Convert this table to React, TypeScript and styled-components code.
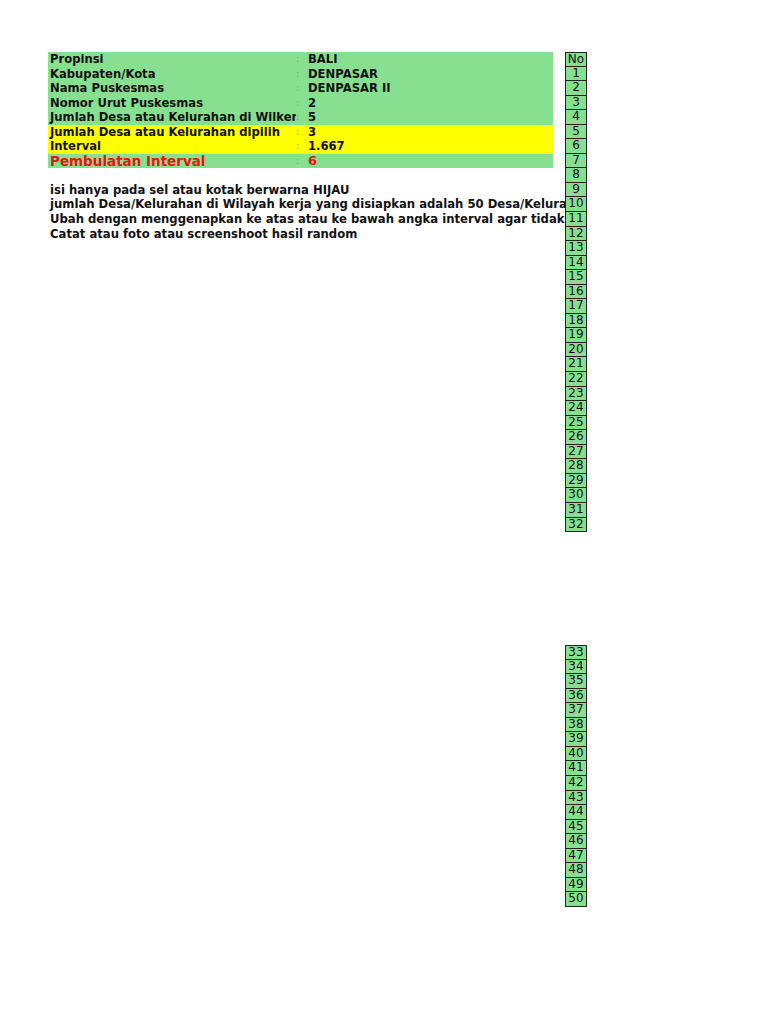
import React from "react";
import styled, { createGlobalStyle } from "styled-components";

const Global = createGlobalStyle`
  html, body { margin: 0; padding: 0; background: #fff; }
  body { font-family: "DejaVu Sans", sans-serif; }
`;

const ROW = 14.55;
const GREEN = "#87e08f";

const Page = styled.div`
  width: 768px;
  height: 1024px;
  box-sizing: border-box;
  padding: 52px 0 0 48px;
  display: flex;
  align-items: flex-start;
  overflow: hidden;
`;

const Left = styled.div`
  width: 517px;
  display: flex;
  flex-direction: column;
`;

const InfoTable = styled.div`
  width: 505px;
  display: flex;
  flex-direction: column;
`;

const InfoRow = styled.div<{ $bg: string }>`
  height: ${ROW}px;
  display: grid;
  grid-template-columns: 248px 12px 1fr;
  align-items: center;
  background: ${(p) => p.$bg};
  font-size: 11.6px;
  font-weight: bold;
  color: #111;
  line-height: ${ROW}px;
`;

const Label = styled.div<{ $big?: boolean }>`
  padding-left: 2px;
  white-space: nowrap;
  overflow: hidden;
  color: ${(p) => (p.$big ? "#ee1111" : "#111")};
  font-size: ${(p) => (p.$big ? "13.5px" : "11.6px")};
`;

const Colon = styled.div`
  color: #999;
  font-weight: normal;
  font-size: 10px;
`;

const Value = styled.div<{ $red?: boolean }>`
  color: ${(p) => (p.$red ? "#ee1111" : "#111")};
  font-size: ${(p) => (p.$red ? "13px" : "11.6px")};
  white-space: nowrap;
`;

const Notes = styled.div`
  margin-top: ${ROW}px;
  display: flex;
  flex-direction: column;
`;

const Note = styled.div`
  height: ${ROW}px;
  line-height: ${ROW}px;
  font-size: 11.65px;
  font-weight: bold;
  color: #111;
  white-space: nowrap;
  overflow: hidden;
  padding-left: 2px;
`;

const NoCol = styled.div`
  width: 22px;
  display: flex;
  flex-direction: column;
`;

const Cell = styled.div`
  height: ${ROW}px;
  box-sizing: border-box;
  border: 1px solid #222;
  border-top: none;
  background: ${GREEN};
  font-size: 12px;
  line-height: ${ROW - 1}px;
  text-align: center;
  color: #111;
  &:first-child, &.first { border-top: 1px solid #222; line-height: ${ROW - 2}px; }
`;

const Gap = styled.div`
  height: 113px;
`;

const info: { label: string; value: string; bg: string; big?: boolean }[] = [
  { label: "Propinsi", value: "BALI", bg: GREEN },
  { label: "Kabupaten/Kota", value: "DENPASAR", bg: GREEN },
  { label: "Nama Puskesmas", value: "DENPASAR II", bg: GREEN },
  { label: "Nomor Urut Puskesmas", value: "2", bg: GREEN },
  { label: "Jumlah Desa atau Kelurahan di Wilkerja", value: "5", bg: GREEN },
  { label: "Jumlah Desa atau Kelurahan dipilih", value: "3", bg: "#ffff00" },
  { label: "Interval", value: "1.667", bg: "#ffff00" },
  { label: "Pembulatan Interval", value: "6", bg: GREEN, big: true },
];

const notes = [
  "isi hanya pada sel atau kotak berwarna HIJAU",
  "jumlah Desa/Kelurahan di Wilayah kerja yang disiapkan adalah 50 Desa/Kelurahan",
  "Ubah dengan menggenapkan ke atas atau ke bawah angka interval agar tidak melebihi jumlah desa",
  "Catat atau foto atau screenshoot hasil random",
];

export default function App() {
  const first = Array.from({ length: 32 }, (_, i) => i + 1);
  const second = Array.from({ length: 18 }, (_, i) => i + 33);
  return (
    <>
      <Global />
      <Page>
        <Left>
          <InfoTable>
            {info.map((r) => (
              <InfoRow key={r.label} $bg={r.bg}>
                <Label $big={r.big}>{r.label}</Label>
                <Colon>:</Colon>
                <Value $red={r.big}>{r.value}</Value>
              </InfoRow>
            ))}
          </InfoTable>
          <Notes>
            {notes.map((n) => (
              <Note key={n}>{n}</Note>
            ))}
          </Notes>
        </Left>
        <NoCol>
          <Cell>No</Cell>
          {first.map((n) => (
            <Cell key={n}>{n}</Cell>
          ))}
          <Gap />
          {second.map((n, i) => (
            <Cell key={n} className={i === 0 ? "first" : undefined}>
              {n}
            </Cell>
          ))}
        </NoCol>
      </Page>
    </>
  );
}
